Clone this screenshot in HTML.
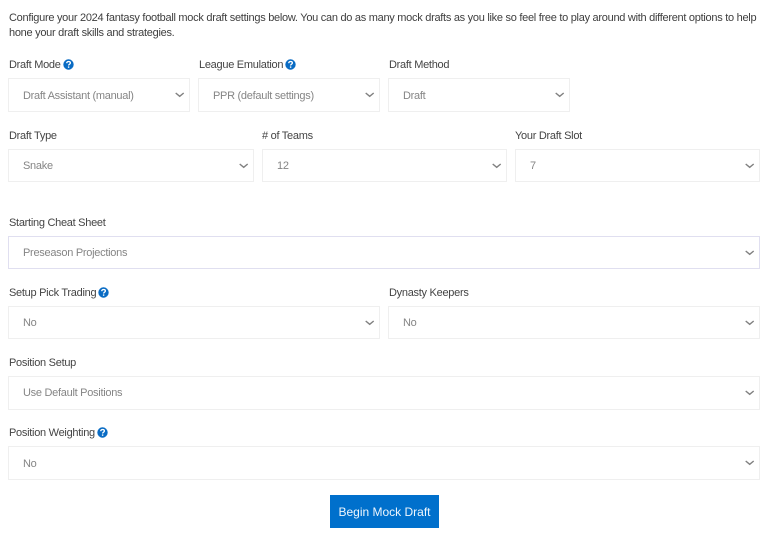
<!DOCTYPE html>
<html>
<head>
<meta charset="utf-8">
<style>
html,body{margin:0;padding:0;background:#fff;width:768px;height:535px;overflow:hidden}
body{font-family:"Liberation Sans",sans-serif;font-size:11px;letter-spacing:-.28px;color:#4a4a4a;position:relative}
.w{position:absolute;left:0;top:0;width:768px;height:535px;filter:blur(.25px)}
.p{position:absolute;left:9px;top:11px;width:755px;line-height:15px;color:#3e3e3e}
.l{position:absolute;height:16px;line-height:16px;white-space:nowrap;color:#444}
.s{position:absolute;box-sizing:border-box;border:1px solid #efefef;background:#fff;color:#858585;line-height:32px;padding-left:14px;white-space:nowrap}
.t{line-height:34px}
.c{border-color:#e0dff0}
.s svg{position:absolute;right:4px;top:11px}
.q{position:absolute;width:11px;height:11px}
.b{position:absolute;left:330px;top:495px;width:109px;height:33px;background:#0070cc;color:#eef6fd;text-align:center;line-height:34px;font-size:12px;letter-spacing:0}
</style>
</head>
<body>
<div class="w">
<div class="p">Configure your 2024 fantasy football mock draft settings below. You can do as many mock drafts as you like so feel free to play around with different options to help hone your draft skills and strategies.</div>

<div class="l" style="left:9px;top:57px">Draft Mode</div>
<svg class="q" style="left:63px;top:59px" viewBox="0 0 11 11"><circle cx="5.5" cy="5.5" r="5.2" fill="#0a6cc4"/><path d="M3.7 4.2C3.8 3 4.6 2.5 5.6 2.5C6.7 2.5 7.4 3.1 7.4 4C7.4 5.2 5.6 5.2 5.6 6.5" fill="none" stroke="#fff" stroke-width="1.3"/><rect x="4.9" y="7.4" width="1.4" height="1.4" fill="#fff"/></svg>
<div class="s t" style="left:8px;top:78px;width:182px;height:34px">Draft Assistant (manual)<svg width="10" height="10" viewBox="0 0 10 10"><path d="M.7 3L4.7 6.3L8.7 3" fill="none" stroke="#808080" stroke-width="1.4"/></svg></div>

<div class="l" style="left:199px;top:57px">League Emulation</div>
<svg class="q" style="left:285px;top:59px" viewBox="0 0 11 11"><circle cx="5.5" cy="5.5" r="5.2" fill="#0a6cc4"/><path d="M3.7 4.2C3.8 3 4.6 2.5 5.6 2.5C6.7 2.5 7.4 3.1 7.4 4C7.4 5.2 5.6 5.2 5.6 6.5" fill="none" stroke="#fff" stroke-width="1.3"/><rect x="4.9" y="7.4" width="1.4" height="1.4" fill="#fff"/></svg>
<div class="s t" style="left:198px;top:78px;width:182px;height:34px">PPR (default settings)<svg width="10" height="10" viewBox="0 0 10 10"><path d="M.7 3L4.7 6.3L8.7 3" fill="none" stroke="#808080" stroke-width="1.4"/></svg></div>

<div class="l" style="left:389px;top:57px">Draft Method</div>
<div class="s t" style="left:388px;top:78px;width:182px;height:34px">Draft<svg width="10" height="10" viewBox="0 0 10 10"><path d="M.7 3L4.7 6.3L8.7 3" fill="none" stroke="#808080" stroke-width="1.4"/></svg></div>

<div class="l" style="left:9px;top:128px">Draft Type</div>
<div class="s" style="left:8px;top:149px;width:246px;height:33px">Snake<svg width="10" height="10" viewBox="0 0 10 10"><path d="M.7 3L4.7 6.3L8.7 3" fill="none" stroke="#808080" stroke-width="1.4"/></svg></div>

<div class="l" style="left:262px;top:128px"># of Teams</div>
<div class="s" style="left:262px;top:149px;width:245px;height:33px">12<svg width="10" height="10" viewBox="0 0 10 10"><path d="M.7 3L4.7 6.3L8.7 3" fill="none" stroke="#808080" stroke-width="1.4"/></svg></div>

<div class="l" style="left:515px;top:128px">Your Draft Slot</div>
<div class="s" style="left:515px;top:149px;width:245px;height:33px">7<svg width="10" height="10" viewBox="0 0 10 10"><path d="M.7 3L4.7 6.3L8.7 3" fill="none" stroke="#808080" stroke-width="1.4"/></svg></div>

<div class="l" style="left:9px;top:215px">Starting Cheat Sheet</div>
<div class="s c" style="left:8px;top:236px;width:752px;height:33px">Preseason Projections<svg width="10" height="10" viewBox="0 0 10 10"><path d="M.7 3L4.7 6.3L8.7 3" fill="none" stroke="#808080" stroke-width="1.4"/></svg></div>

<div class="l" style="left:9px;top:285px">Setup Pick Trading</div>
<svg class="q" style="left:98px;top:287px" viewBox="0 0 11 11"><circle cx="5.5" cy="5.5" r="5.2" fill="#0a6cc4"/><path d="M3.7 4.2C3.8 3 4.6 2.5 5.6 2.5C6.7 2.5 7.4 3.1 7.4 4C7.4 5.2 5.6 5.2 5.6 6.5" fill="none" stroke="#fff" stroke-width="1.3"/><rect x="4.9" y="7.4" width="1.4" height="1.4" fill="#fff"/></svg>
<div class="s" style="left:8px;top:306px;width:372px;height:33px">No<svg width="10" height="10" viewBox="0 0 10 10"><path d="M.7 3L4.7 6.3L8.7 3" fill="none" stroke="#808080" stroke-width="1.4"/></svg></div>

<div class="l" style="left:389px;top:285px">Dynasty Keepers</div>
<div class="s" style="left:388px;top:306px;width:372px;height:33px">No<svg width="10" height="10" viewBox="0 0 10 10"><path d="M.7 3L4.7 6.3L8.7 3" fill="none" stroke="#808080" stroke-width="1.4"/></svg></div>

<div class="l" style="left:9px;top:355px">Position Setup</div>
<div class="s" style="left:8px;top:376px;width:752px;height:34px">Use Default Positions<svg width="10" height="10" viewBox="0 0 10 10"><path d="M.7 3L4.7 6.3L8.7 3" fill="none" stroke="#808080" stroke-width="1.4"/></svg></div>

<div class="l" style="left:9px;top:425px">Position Weighting</div>
<svg class="q" style="left:97px;top:427px" viewBox="0 0 11 11"><circle cx="5.5" cy="5.5" r="5.2" fill="#0a6cc4"/><path d="M3.7 4.2C3.8 3 4.6 2.5 5.6 2.5C6.7 2.5 7.4 3.1 7.4 4C7.4 5.2 5.6 5.2 5.6 6.5" fill="none" stroke="#fff" stroke-width="1.3"/><rect x="4.9" y="7.4" width="1.4" height="1.4" fill="#fff"/></svg>
<div class="s t" style="left:8px;top:446px;width:752px;height:34px">No<svg width="10" height="10" viewBox="0 0 10 10"><path d="M.7 3L4.7 6.3L8.7 3" fill="none" stroke="#808080" stroke-width="1.4"/></svg></div>

<div class="b">Begin Mock Draft</div>
</div>
</body>
</html>
